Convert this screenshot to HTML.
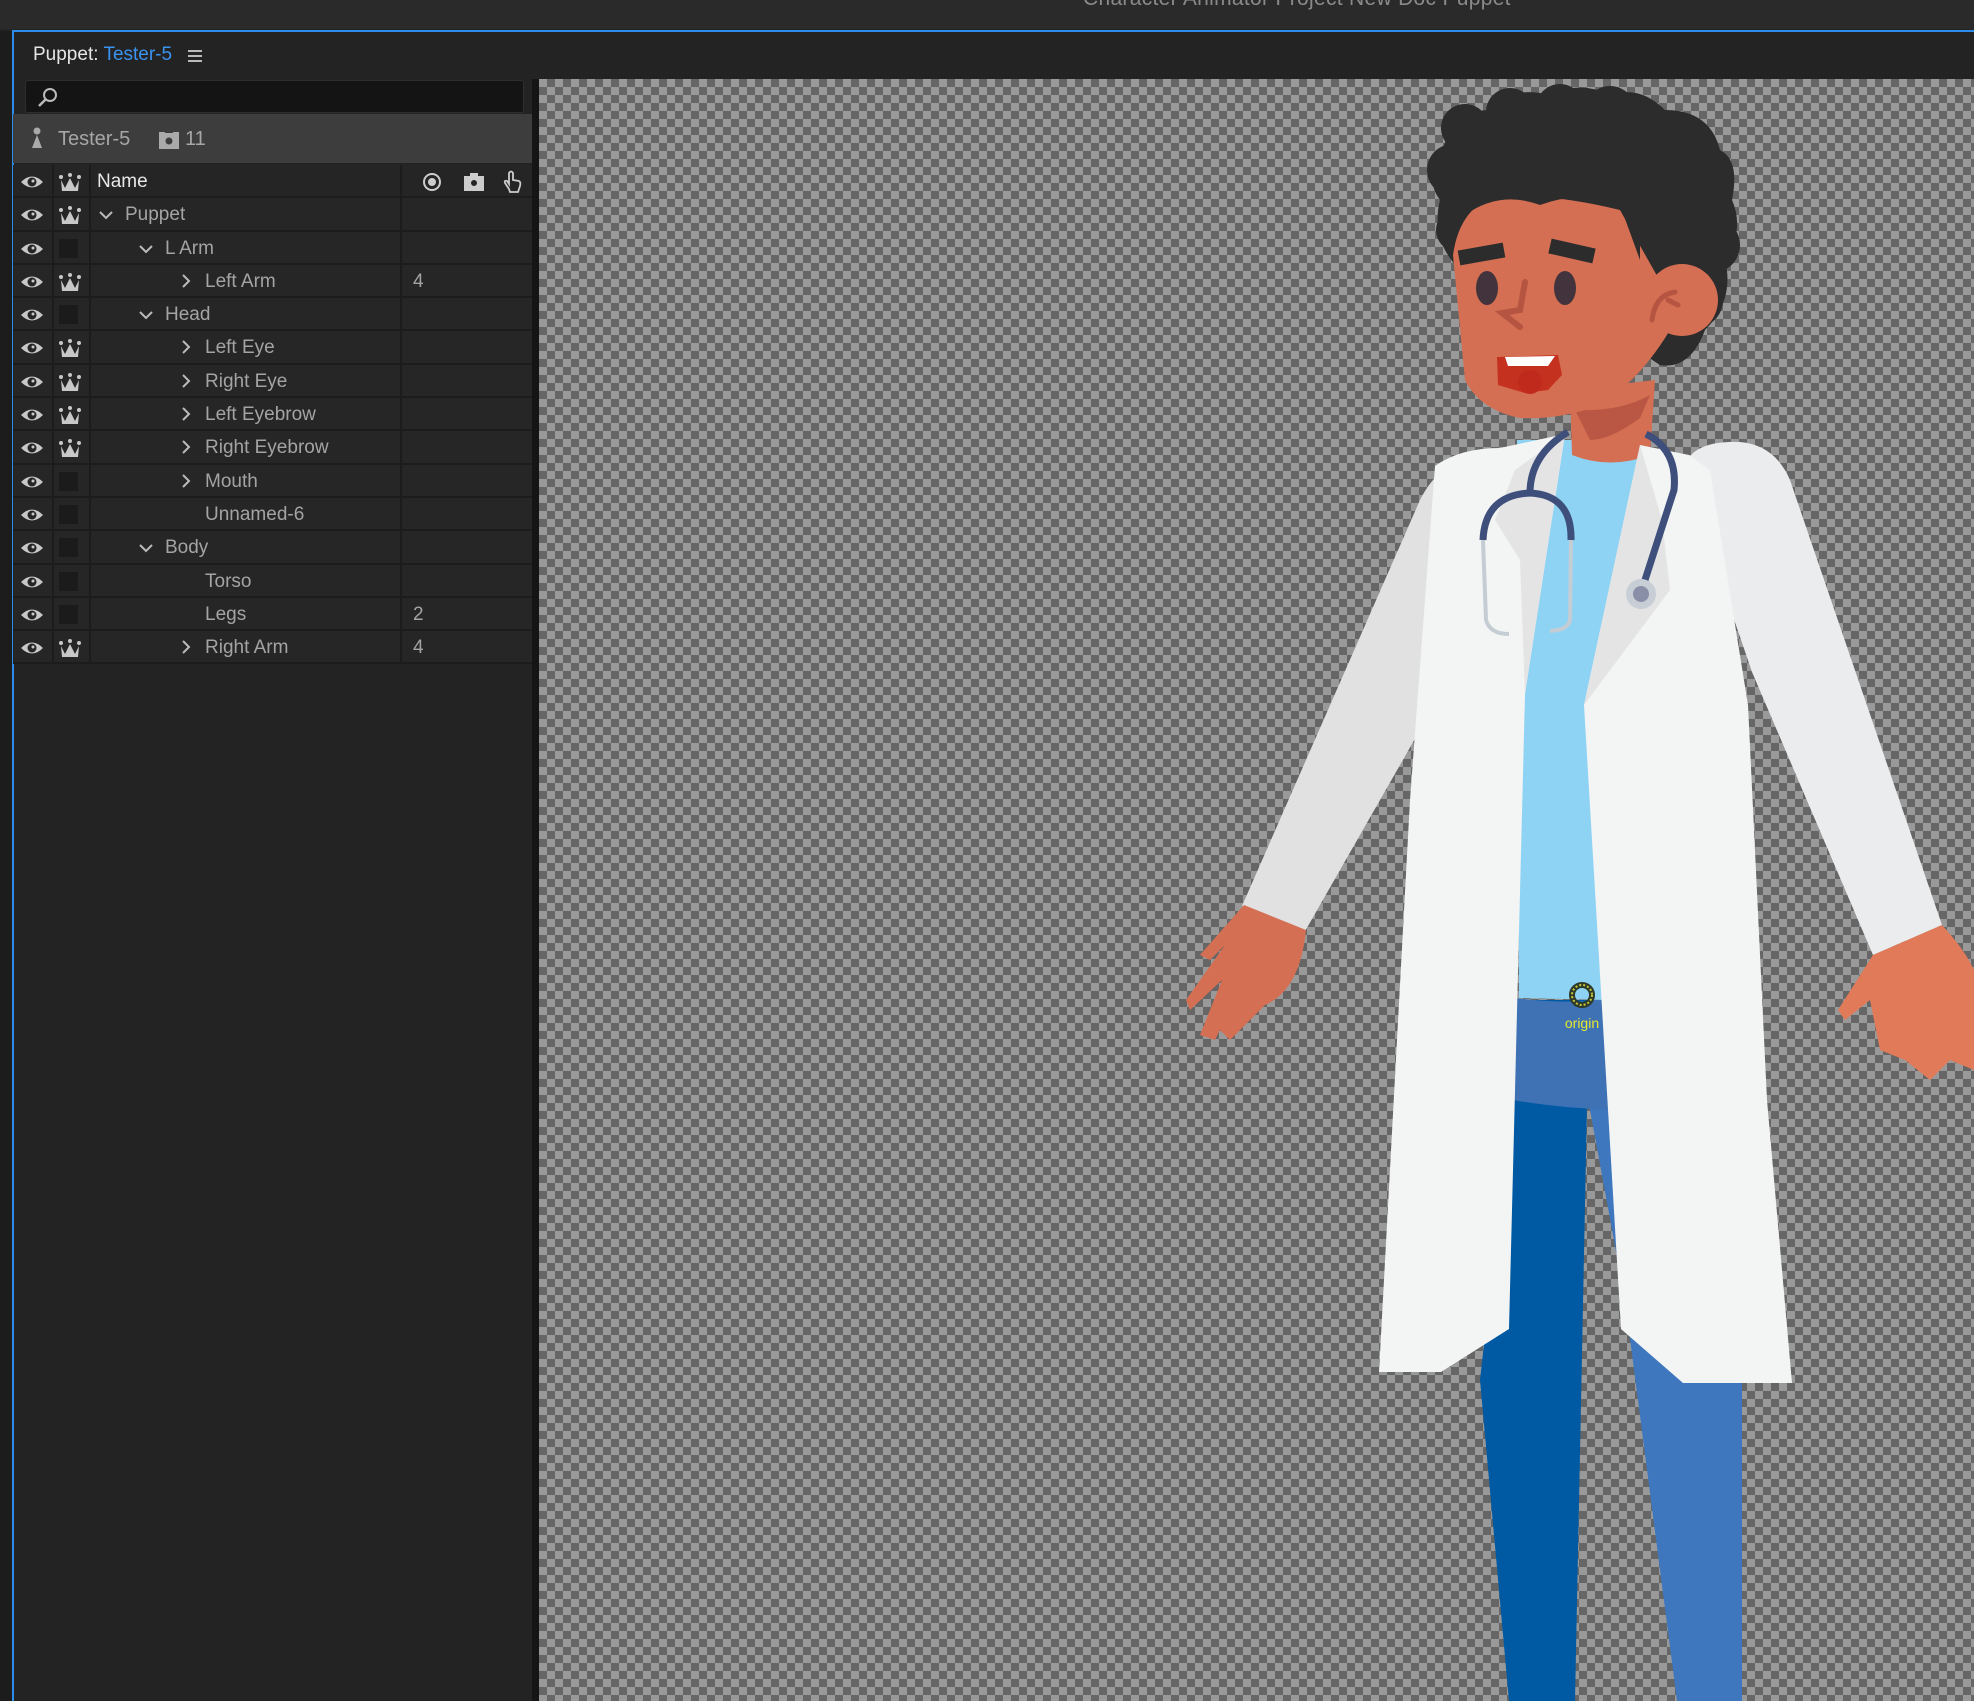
<!DOCTYPE html>
<html><head><meta charset="utf-8"><style>
*{margin:0;padding:0;box-sizing:border-box}
body{width:1974px;height:1701px;background:#232323;position:relative;overflow:hidden;font-family:"Liberation Sans",sans-serif}
.top{position:absolute;left:0;top:0;width:1974px;height:29px;background:#2a2a2a}
.top span{position:absolute;left:1083px;top:-13px;font-size:21px;color:#8a8a8a;letter-spacing:.3px}
.bl{position:absolute;background:#2d8ceb}
.left{position:absolute;left:0;top:31px;width:13px;height:1670px;background:#1c1c1c}
.title{position:absolute;left:33px;top:44px;font-size:19px;color:#e6e6e6}
.title b{font-weight:normal;color:#3b93f0}
.menu{position:absolute;left:188px;top:50px;width:14px}
.menu i{display:block;height:2px;background:#bbb;margin-bottom:3px}
.search{position:absolute;left:25px;top:80px;width:499px;height:33px;background:#141414;border:1px solid #2e2e2e;border-radius:3px}
.tester{position:absolute;left:13px;top:114px;width:519px;height:49px;background:#3d3d3d;color:#a6a6a6;font-size:20px}
.rows{position:absolute;left:13px;top:165px;width:519px}
.row{position:relative;height:33.3px;border-bottom:2px solid #1c1c1c;background:#262626;color:#a4a4a4;font-size:19px}
.row.h{background:#252525;color:#e8e8e8}
.row .c1{position:absolute;left:39px;top:0;bottom:0;width:2px;background:#1c1c1c}
.row .c2{position:absolute;left:76px;top:0;bottom:0;width:2px;background:#1c1c1c}
.row .c3{position:absolute;left:387px;top:0;bottom:0;width:2px;background:#1c1c1c}
.row .t{position:absolute;top:6px;white-space:nowrap}
.row .v{position:absolute;left:400px;top:6px}
.eye{position:absolute;left:7px;top:9px}
.cr{position:absolute;left:45px;top:6px}
.sq{position:absolute;left:46px;top:7px;width:19px;height:19px;background:#1b1b1b}
.chev{position:absolute;top:9px}
.gap{position:absolute;left:532px;top:79px;width:7px;height:1622px;background:#151515}
.canvas{position:absolute;left:539px;top:79px;width:1435px;height:1622px;background:repeating-conic-gradient(#666 0 25%,#999 0 50%) 0 0/16px 16px}
</style></head><body>
<div class="top"><span>Character Animator Project New Doc Puppet</span></div>
<div class="left"></div>
<div class="bl" style="left:13px;top:30px;width:1961px;height:2px"></div>
<div class="bl" style="left:12px;top:30px;width:2px;height:1671px"></div>
<div class="title">Puppet: <b>Tester-5</b></div>
<div class="menu"><i></i><i></i><i></i></div>
<div class="search"><svg width="30" height="30" style="position:absolute;left:7px;top:3px"><circle cx="17" cy="11" r="6" fill="none" stroke="#bbb" stroke-width="2"/><line x1="13" y1="15" x2="6" y2="22" stroke="#bbb" stroke-width="2.5"/></svg></div>
<div class="tester">
<svg width="20" height="26" style="position:absolute;left:16px;top:13px"><circle cx="8" cy="4" r="3.5" fill="#aaa"/><path d="M8 8 L3 21 L13 21 Z" fill="#aaa"/></svg>
<span style="position:absolute;left:45px;top:14px">Tester-5</span>
<svg width="24" height="22" style="position:absolute;left:145px;top:15px"><rect x="1" y="3" width="20" height="17" fill="#aaa"/><rect x="7" y="0" width="8" height="4" fill="#3d3d3d"/><circle cx="11" cy="12" r="3.5" fill="#3d3d3d"/></svg>
<span style="position:absolute;left:172px;top:14px">11</span>
</div>
<div class="rows" id="rows"></div>
<div class="gap"></div>
<div class="canvas"></div>
<svg width="1974" height="1701" style="position:absolute;left:0;top:0">
<defs><clipPath id="cv"><rect x="539" y="79" width="1435" height="1622"/></clipPath></defs>
<g clip-path="url(#cv)">
<path d="M1512 1000 L1605 1000 L1600 1110 L1587 1106 L1575 1701 L1509 1701 L1480 1380 L1500 1200 Z" fill="#005aa3"/>
<path d="M1587 1000 L1612 1000 L1640 1110 L1649 1345 L1742 1345 L1742 1701 L1677 1701 L1625 1300 L1590 1110 Z" fill="#3e77bd"/>
<path d="M1515 998 Q1560 1004 1610 1000 L1612 1110 Q1560 1108 1512 1100 Z" fill="#3e72b5"/>
<path d="M1517 440 L1640 440 L1605 1000 L1519 998 Z" fill="#8fd3f4"/>
<path d="M1570 390 L1655 380 L1650 455 Q1610 470 1572 455 Z" fill="#d46f53"/>
<path d="M1575 410 Q1620 412 1650 395 L1640 418 Q1610 440 1590 440 Z" fill="#b95644"/>
<path d="M1480 455 Q1440 460 1420 500 L1242 906 L1304 933 L1416 737 L1460 700 Z" fill="#e1e1e1"/>
<path d="M1683 470 Q1690 440 1740 442 Q1775 445 1790 480 L1942 925 L1873 955 L1752 672 Z" fill="#ebecee"/>
<path d="M1435 466 Q1460 448 1500 448 L1565 434 L1525 694 L1509 1329 L1441 1372 L1379 1372 L1410 800 Z" fill="#f3f4f4"/>
<path d="M1640 445 L1689 455 L1710 470 L1748 705 L1767 1100 L1792 1383 L1683 1383 L1621 1329 L1584 705 Z" fill="#f3f4f4"/>
<path d="M1565 434 L1515 470 L1495 520 L1520 560 L1525 694 Z" fill="#e4e4e4"/>
<path d="M1640 445 L1662 520 L1670 590 L1584 705 Z" fill="#e4e4e4"/>
<path d="M1244 905 L1306 930 Q1300 990 1265 1005 L1230 1040 L1220 1030 L1240 990 L1215 1040 L1200 1035 L1222 980 L1190 1010 L1186 1000 L1225 945 L1210 960 L1200 955 Z" fill="#d46f53"/>
<path d="M1873 955 L1942 925 Q1965 950 1974 970 L1974 1070 L1950 1060 L1930 1080 L1905 1060 L1880 1050 L1870 1000 L1845 1020 L1838 1010 Z" fill="#e17a58"/>
<!-- hair -->
<g fill="#2c2c2c">
<path d="M1440 160 Q1450 110 1490 110 Q1510 85 1550 95 Q1580 80 1610 95 Q1640 85 1665 110 Q1710 110 1720 150 Q1740 160 1732 200 Q1745 230 1725 260 Q1735 300 1705 330 Q1690 370 1660 365 L1560 300 L1460 270 Q1430 240 1440 200 Q1425 180 1440 160 Z"/>
<circle cx="1465" cy="128" r="24"/><circle cx="1510" cy="112" r="24"/><circle cx="1560" cy="108" r="24"/><circle cx="1610" cy="112" r="26"/><circle cx="1655" cy="140" r="30"/><circle cx="1700" cy="185" r="32"/><circle cx="1712" cy="245" r="28"/><circle cx="1695" cy="300" r="28"/><circle cx="1453" cy="170" r="26"/><circle cx="1458" cy="230" r="22"/>
</g>
<path d="M1453 255 Q1460 205 1500 195 Q1560 195 1620 210 L1665 290 L1670 330 Q1640 380 1600 405 Q1560 420 1520 418 Q1480 410 1465 380 Z" fill="#d46f53"/>
<path d="M1465 215 Q1500 190 1540 205 Q1580 190 1620 205 L1640 260 L1640 180 L1480 170 Z" fill="#2c2c2c"/>
<circle cx="1682" cy="300" r="36" fill="#d46f53"/>
<path d="M1652 320 Q1655 295 1675 292 M1668 300 L1678 305" stroke="#b65442" stroke-width="5" fill="none" stroke-linecap="round"/>
<path d="M1459 258 L1504 250 M1550 246 L1594 256" stroke="#2c2c2c" stroke-width="15" stroke-linecap="butt"/>
<ellipse cx="1487" cy="288" rx="11" ry="17" fill="#42333d"/>
<ellipse cx="1565" cy="288" rx="11" ry="17" fill="#42333d"/>
<path d="M1525 282 L1520 310 L1502 313 L1520 327" stroke="#b65442" stroke-width="6" fill="none" stroke-linecap="round"/>
<path d="M1497 357 L1558 355 L1562 375 L1548 390 L1525 393 L1498 385 Z" fill="#c5311f"/>
<circle cx="1530" cy="382" r="12" fill="#c02a1c"/>
<path d="M1505 357 L1555 356 L1548 366 L1508 366 Z" fill="#fff"/>
<path d="M1460 350 Q1470 395 1510 412" stroke="#d46f53" stroke-width="0" fill="none"/>
<path d="M1483 540 L1486 620 Q1490 634 1509 634 M1571 540 L1570 620 Q1568 630 1550 631" stroke="#c4ccd4" stroke-width="4" fill="none"/>
<path d="M1568 432 Q1530 455 1530 493 Q1485 495 1483 540 M1530 493 Q1572 495 1571 540" stroke="#3d4f7a" stroke-width="7" fill="none"/>
<path d="M1646 434 Q1678 450 1674 490 L1645 580" stroke="#3d4f7a" stroke-width="7" fill="none"/>
<circle cx="1641" cy="594" r="15" fill="#c7ced6"/><circle cx="1641" cy="594" r="8" fill="#8a8fa8"/>
<circle cx="1582" cy="995" r="10" fill="none" stroke="#2d3a2a" stroke-width="6"/>
<circle cx="1582" cy="995" r="10" fill="none" stroke="#c8c838" stroke-width="2" stroke-dasharray="2 2"/>
<text x="1582" y="1028" font-size="14" fill="#e8e82a" text-anchor="middle" font-family="Liberation Sans">origin</text>
</g>
</svg>
<script>
var items=[["Name",0,0,1,"",1],["Puppet",1,"d",1,""],["L Arm",2,"d",0,""],["Left Arm",3,"r",1,"4"],["Head",2,"d",0,""],["Left Eye",3,"r",1,""],["Right Eye",3,"r",1,""],["Left Eyebrow",3,"r",1,""],["Right Eyebrow",3,"r",1,""],["Mouth",3,"r",0,""],["Unnamed-6",3,"",0,""],["Body",2,"d",0,""],["Torso",3,"",0,""],["Legs",3,"",0,"2"],["Right Arm",3,"r",1,"4"]];
var eye='<svg class="eye" width="24" height="16"><path d="M1 8 Q12 -3 23 8 Q12 19 1 8Z" fill="#c8c8c8"/><circle cx="12" cy="8" r="4.5" fill="#262626"/><circle cx="13" cy="7" r="1.5" fill="#c8c8c8"/></svg>';
var crown='<svg class="cr" width="24" height="22"><path d="M3 9 L7 17 L12 7 L17 17 L21 9 L20 20 L4 20 Z" fill="#c8c8c8"/><circle cx="3" cy="6" r="2" fill="#c8c8c8"/><circle cx="12" cy="4" r="2" fill="#c8c8c8"/><circle cx="21" cy="6" r="2" fill="#c8c8c8"/></svg>';
var h='';var tx=[0,112,152,192];
items.forEach(function(it,i){
 var s='<div class="row'+(i==0?' h':'')+'"><div class="c1"></div><div class="c2"></div><div class="c3"></div>'+eye+(it[3]?crown:'<div class="sq"></div>');
 if(i==0){s+='<span class="t" style="left:84px">Name</span><svg width="120" height="30" style="position:absolute;left:394px;top:2px"><circle cx="25" cy="15" r="8" fill="none" stroke="#ccc" stroke-width="2"/><circle cx="25" cy="15" r="4" fill="#ccc"/><rect x="57" y="9" width="20" height="15" fill="#ccc"/><rect x="63" y="6" width="8" height="4" fill="#ccc"/><circle cx="67" cy="16" r="3" fill="#252525"/><path d="M102 22 L98 16 Q97 13 100 14 L102 17 L102 6 Q104 3 106 6 L106 13 L112 14 Q114 15 113 19 L111 25 L103 25 Z" fill="none" stroke="#ccc" stroke-width="1.8"/></svg>';}
 else{var x=tx[it[1]];
  if(it[2]=='d')s+='<svg class="chev" style="left:'+(x-26)+'px;top:12px" width="14" height="10"><path d="M1 2 L7 8 L13 2" stroke="#bbb" stroke-width="2" fill="none"/></svg>';
  if(it[2]=='r')s+='<svg class="chev" style="left:'+(x-24)+'px" width="10" height="14"><path d="M2 1 L8 7 L2 13" stroke="#bbb" stroke-width="2" fill="none"/></svg>';
  s+='<span class="t" style="left:'+x+'px">'+it[0]+'</span>';
  if(it[4])s+='<span class="v">'+it[4]+'</span>';}
 h+=s+'</div>';});
document.getElementById('rows').innerHTML=h;
</script>
</body></html>
